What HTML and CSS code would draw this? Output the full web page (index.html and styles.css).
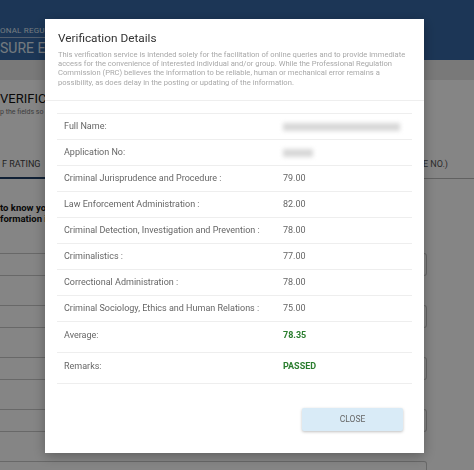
FILE: index.html
```html
<!DOCTYPE html>
<html lang="en">
<head>
    <meta charset="UTF-8">
    <meta name="viewport" content="width=device-width, initial-scale=1.0">
    <title>Verification Details</title>
    <link rel="stylesheet" href="styles.css">
</head>
<body>
    <div class="page">
        <div class="topbar">
            <div class="agency">ONAL REGULATION</div>
            <div class="exam">SURE EXAM</div>
        </div>
        <div class="subbar"></div>

        <div class="content">
            <div class="page-title">VERIFICATION</div>
            <div class="page-hint">p the fields so</div>

            <div class="tabs">
                <div class="tab active">F RATING</div>
                <div class="tab">E NO.)</div>
            </div>

            <p class="intro">to know your<br>formation is</p>

            <div class="fields">
                <div class="field"></div>
                <div class="field"></div>
                <div class="field"></div>
                <div class="field"></div>
                <div class="field"></div>
            </div>
        </div>
    </div>

    <div class="overlay"></div>

    <div class="modal">
        <div class="modal-header">
            <h2>Verification Details</h2>
            <p class="disclaimer">This verification service is intended solely for the facilitation of online queries and to provide immediate access for the convenience of interested individual and/or group. While the Professional Regulation Commission (PRC) believes the information to be reliable, human or mechanical error remains a possibility, as does delay in the posting or updating of the information.</p>
        </div>

        <div class="modal-body">
            <table class="details">
                <tr>
                    <td>Full Name:</td>
                    <td><span class="blur long"></span></td>
                </tr>
                <tr>
                    <td>Application No:</td>
                    <td><span class="blur short"></span></td>
                </tr>
                <tr>
                    <td>Criminal Jurisprudence and Procedure :</td>
                    <td>79.00</td>
                </tr>
                <tr>
                    <td>Law Enforcement Administration :</td>
                    <td>82.00</td>
                </tr>
                <tr>
                    <td>Criminal Detection, Investigation and Prevention :</td>
                    <td>78.00</td>
                </tr>
                <tr>
                    <td>Criminalistics :</td>
                    <td>77.00</td>
                </tr>
                <tr>
                    <td>Correctional Administration :</td>
                    <td>78.00</td>
                </tr>
                <tr>
                    <td>Criminal Sociology, Ethics and Human Relations :</td>
                    <td>75.00</td>
                </tr>
                <tr class="tall">
                    <td>Average:</td>
                    <td class="good">78.35</td>
                </tr>
                <tr class="tall">
                    <td>Remarks:</td>
                    <td class="good">PASSED</td>
                </tr>
            </table>
        </div>

        <div class="modal-footer">
            <button class="btn-close">CLOSE</button>
        </div>
    </div>
</body>
</html>
```

FILE: styles.css
```css
html, body {
    margin: 0;
    padding: 0;
    height: 100%;
    overflow: hidden;
}
body {
    font-family: Roboto, 'Liberation Sans', Arial, sans-serif;
    background-color: #fff;
    color: #333;
}

/* page behind the dialog */
.page {
    height: 100%;
    overflow: hidden;
}
.topbar {
    height: 60px;
    background-color: #3668a5;
    color: #dfe8f3;
    padding-top: 18px;
    box-sizing: border-box;
    white-space: nowrap;
}
.agency {
    display: inline-block;
    font-size: 8px;
    letter-spacing: 0.2px;
    padding-bottom: 2px;
    border-bottom: 1px solid #9fb6d3;
}
.exam {
    font-size: 14px;
    margin-top: 2px;
}
.subbar {
    height: 20px;
    background-color: #e8e8e8;
}
.content {
    white-space: nowrap;
}
.page-title {
    font-size: 13px;
    color: #111;
    margin-top: 11px;
}
.page-hint {
    font-size: 7px;
    color: #777;
    margin-top: 2px;
}
.tabs {
    display: flex;
    justify-content: space-between;
    margin-top: 41px;
    border-bottom: 1px solid #bbb;
}
.tab {
    font-size: 9px;
    color: #444;
    padding: 2px 0 8px 2px;
}
.tab:last-child {
    margin-right: 26px;
    color: #555;
}
.tab.active {
    border-bottom: 2px solid #1f3f66;
    margin-bottom: -1px;
    width: 60px;
}
.intro {
    font-size: 9.5px;
    font-weight: bold;
    line-height: 11px;
    color: #111;
    margin: 23px 0 0;
}
.fields {
    width: 427px;
    margin-top: 29px;
}
.field {
    height: 21px;
    border: 1px solid #c8c8c8;
    border-left: none;
    border-radius: 0 3px 3px 0;
    margin-bottom: 29px;
}

.overlay {
    position: fixed;
    inset: 0;
    background-color: rgba(0, 0, 0, 0.48);
}

/* dialog */
.modal {
    position: fixed;
    left: 45px;
    top: 19px;
    width: 379px;
    height: 434px;
    background-color: #fff;
    box-shadow: 0 3px 12px rgba(0, 0, 0, 0.3);
}
.modal-header {
    padding: 12px 13px 13px;
    border-bottom: 1px solid #eee;
}
.modal-header h2 {
    font-size: 11.8px;
    font-weight: normal;
    color: #333;
    margin: 0 0 5px;
}
.disclaimer {
    font-size: 7.6px;
    line-height: 9.2px;
    color: #a8a8a8;
    margin: 0;
}
.modal-body {
    padding: 12px 12px 0;
}
.details {
    width: 100%;
    border-collapse: collapse;
    border-top: 1px solid #eee;
    font-size: 9px;
    color: #666;
}
.details td {
    height: 25px;
    padding: 0 0 0 7px;
    border-bottom: 1px solid #eee;
    vertical-align: middle;
}
.details td:first-child {
    width: 212px;
}
.details tr.tall td {
    height: 31px;
    vertical-align: top;
    padding-top: 8px;
    box-sizing: border-box;
}
.details .good {
    color: #2a7d2e;
    font-weight: bold;
}
.blur {
    display: inline-block;
    height: 8px;
    background-color: #d8d8d8;
    filter: blur(2px);
    vertical-align: middle;
}
.blur.long {
    width: 117px;
}
.blur.short {
    width: 30px;
}
.modal-footer {
    display: flex;
    justify-content: flex-end;
    padding: 24px 21px 0;
}
.btn-close {
    width: 101px;
    height: 23px;
    border: none;
    border-radius: 2px;
    background-color: #d9ebf7;
    color: #666;
    font-family: inherit;
    font-size: 8.5px;
    box-shadow: 0 1px 3px rgba(0, 0, 0, 0.25);
    cursor: pointer;
}
```
